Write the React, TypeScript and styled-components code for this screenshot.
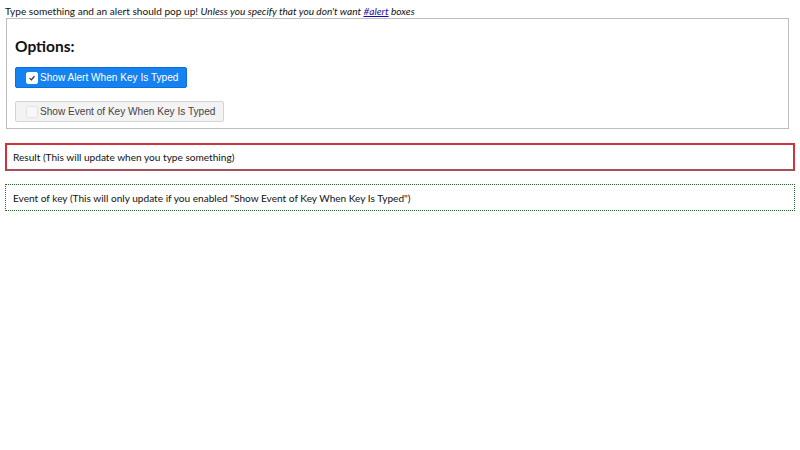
import React, { useState } from 'react';
import styled, { createGlobalStyle } from 'styled-components';

const GlobalStyle = createGlobalStyle`
  html, body {
    margin: 0;
    padding: 0;
    background: #ffffff;
  }
  body {
    font-family: Lato, 'Noto Sans', sans-serif;
    font-size: 10.1px;
    color: #111;
  }
`;

export default function App() {
  const [showAlert, setShowAlert] = useState(true);
  const [showEvent, setShowEvent] = useState(false);

  return (
    <>
      <GlobalStyle />
      <Page>
        <Intro>
          Type something and an alert should pop up! <em>Unless you specify that you don't want <a href="#alert">#alert</a> boxes</em>
        </Intro>
        <OptionsBox>
          <h2>Options:</h2>
          <ButtonStack>
            <ToggleButton $active={showAlert} onClick={() => setShowAlert(!showAlert)}>
              <Check $active={showAlert}>
                {showAlert && (
                  <svg width="8" height="8" viewBox="0 0 10 10">
                    <path d="M2 5.2 L4.2 7.4 L8 2.8" fill="none" stroke="#333" strokeWidth="1.6" />
                  </svg>
                )}
              </Check>
              Show Alert When Key Is Typed
            </ToggleButton>
            <ToggleButton $active={showEvent} onClick={() => setShowEvent(!showEvent)}>
              <Check $active={showEvent} />
              Show Event of Key When Key Is Typed
            </ToggleButton>
          </ButtonStack>
        </OptionsBox>
        <ResultBox $variant="result">Result (This will update when you type something)</ResultBox>
        <ResultBox $variant="event">Event of key (This will only update if you enabled "Show Event of Key When Key Is Typed")</ResultBox>
      </Page>
    </>
  );
}

const Page = styled.div`
  padding: 4px 5px;
  display: flex;
  flex-direction: column;
`;

const Intro = styled.div`
  line-height: 14px;
  a {
    color: #1a0dab;
  }
`;

const OptionsBox = styled.div`
  margin: 0 6px 0 1px;
  border: 1px solid #bdbdbd;
  padding: 17px 8px 6px;
  display: flex;
  flex-direction: column;
  align-items: flex-start;
  h2 {
    margin: 0 0 11px;
    font-size: 15.5px;
    font-weight: 700;
    line-height: 20px;
  }
`;

const ButtonStack = styled.div`
  display: flex;
  flex-direction: column;
  align-items: flex-start;
  gap: 13px;
`;

const ToggleButton = styled.button<{ $active: boolean }>`
  display: flex;
  align-items: center;
  gap: 2px;
  height: 21px;
  padding: 0 8px 0 10px;
  font-family: 'Liberation Sans', Arial, sans-serif;
  font-size: 10.1px;
  border-radius: 2px;
  cursor: pointer;
  color: ${(p) => (p.$active ? '#ffffff' : '#444')};
  background: ${(p) => (p.$active ? '#1582f2' : '#f3f3f3')};
  border: 1px solid ${(p) => (p.$active ? '#0f6fd4' : '#d4d4d4')};
`;

const Check = styled.span<{ $active: boolean }>`
  width: 10px;
  height: 10px;
  display: inline-flex;
  align-items: center;
  justify-content: center;
  border-radius: 2px;
  background: ${(p) => (p.$active ? '#ffffff' : '#f8f8f8')};
  border: 1px solid ${(p) => (p.$active ? '#ffffff' : '#e4e4e4')};
`;

const ResultBox = styled.div<{ $variant: 'result' | 'event' }>`
  margin-top: ${(p) => (p.$variant === 'result' ? '14px' : '13px')};
  height: ${(p) => (p.$variant === 'result' ? '28px' : '27px')};
  box-sizing: border-box;
  display: flex;
  align-items: center;
  padding: 0 ${(p) => (p.$variant === 'result' ? '6px' : '7px')};
  border: ${(p) => (p.$variant === 'result' ? '2px solid #cf343e' : '1px dotted #1f6a24')};
  border-bottom-color: ${(p) => (p.$variant === 'result' ? '#a6505b' : '#1f6a24')};
`;
